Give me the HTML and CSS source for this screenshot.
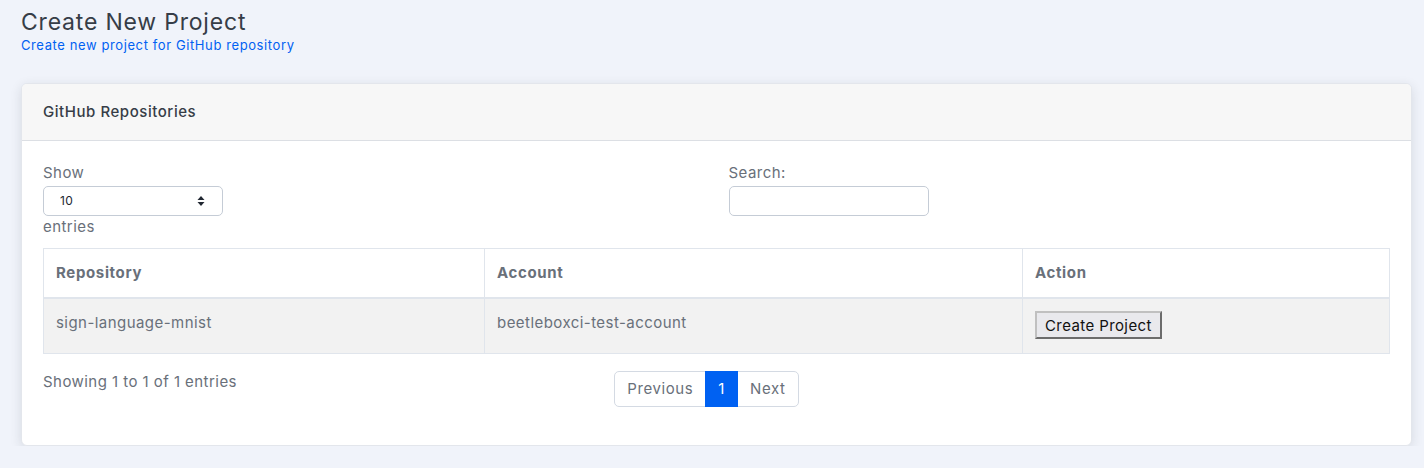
FILE: index.html
```html
<!DOCTYPE html>
<html lang="en">
<head>
    <meta charset="UTF-8">
    <meta name="viewport" content="width=device-width, initial-scale=1.0">
    <title>Create New Project</title>
    <link rel="stylesheet" href="styles.css">
</head>
<body>

    <!-- Page heading -->
    <div class="page-head">
        <h1>Create New Project</h1>
        <div class="subtitle">Create new project for GitHub repository</div>
    </div>

    <!-- Repository card -->
    <div class="card">
        <div class="card-header">GitHub Repositories</div>
        <div class="card-body">

            <div class="row">
                <div class="col-half">
                    <div>Show</div>
                    <div class="select-box">
                        <span>10</span>
                        <svg width="8" height="12" viewBox="0 0 8 12">
                            <path d="M4 1 L7.5 5 H0.5 Z M4 11 L7.5 7 H0.5 Z" fill="#212832"/>
                        </svg>
                    </div>
                    <div>entries</div>
                </div>
                <div class="col-half">
                    <div>Search:</div>
                    <input class="search-input" type="search">
                </div>
            </div>

            <table>
                <thead>
                    <tr>
                        <th class="col-repo">Repository</th>
                        <th class="col-account">Account</th>
                        <th>Action</th>
                    </tr>
                </thead>
                <tbody>
                    <tr>
                        <td>sign-language-mnist</td>
                        <td>beetleboxci-test-account</td>
                        <td><button class="btn-create">Create Project</button></td>
                    </tr>
                </tbody>
            </table>

            <div class="row table-bottom">
                <div class="col-5 info">Showing 1 to 1 of 1 entries</div>
                <div class="col-7">
                    <div class="pagination">
                        <a class="page-link">Previous</a>
                        <a class="page-link active">1</a>
                        <a class="page-link">Next</a>
                    </div>
                </div>
            </div>

        </div>
    </div>

</body>
</html>
```

FILE: styles.css
```css
body {
    font-family: 'Inter', sans-serif;
    background-color: #f0f3fa;
    margin: 0;
    padding: 0 12px 0 21px;
    color: #69707a;
    font-size: 15px;
    letter-spacing: 0.45px;
}
.page-head {
    padding-top: 8px;
}
h1 {
    margin: 0;
    font-size: 23px;
    font-weight: 400;
    color: #363d47;
    line-height: 28px;
    letter-spacing: 0.8px;
}
.subtitle {
    color: #0061f2;
    font-size: 13px;
    line-height: 18px;
    letter-spacing: 0.6px;
}
.card {
    margin-top: 29px;
    background-color: #fff;
    border-radius: 6px;
    border: 1px solid #e3e6ec;
    box-shadow: 0 3px 12px rgba(33, 40, 50, 0.12);
    overflow: hidden;
}
.card-header {
    background-color: #f7f7f7;
    border-bottom: 1px solid #dcdfe4;
    height: 56px;
    line-height: 56px;
    padding: 0 21px;
    font-size: 15px;
    font-weight: 500;
    color: #363d47;
    letter-spacing: 0.55px;
}
.card-body {
    padding: 22px 21px 38px;
}
.row {
    display: flex;
    margin: 0 -12px;
    line-height: 20px;
}
.col-half {
    flex: 0 0 50%;
    padding: 0 12px;
    box-sizing: border-box;
}
.col-5 {
    flex: 0 0 41.6667%;
    padding: 0 12px;
    box-sizing: border-box;
}
.col-7 {
    flex: 0 0 58.3333%;
    padding: 0 12px;
    box-sizing: border-box;
}
.info {
    padding-top: 1px;
}
.select-box {
    display: flex;
    align-items: center;
    justify-content: space-between;
    margin: 3px 0 1px;
    padding: 0 17px 0 16px;
    box-sizing: border-box;
    width: 180px;
    height: 30px;
    border: 1px solid #c5ccd6;
    border-radius: 5px;
    font-size: 12px;
    color: #212832;
}
.search-input {
    display: block;
    width: 200px;
    height: 30px;
    margin: 3px 0 1px;
    box-sizing: border-box;
    border: 1px solid #c5ccd6;
    border-radius: 5px;
    background: #fff;
}
table {
    margin-top: 11px;
    width: 100%;
    border-collapse: collapse;
}
th, td {
    border: 1px solid #e0e5ec;
    padding: 12px;
    text-align: left;
    line-height: 24px;
    vertical-align: top;
}
th {
    border-bottom-width: 2px;
    font-weight: 700;
    letter-spacing: 0.65px;
}
td {
    background-color: #f2f2f2;
    height: 30px;
}
.col-repo {
    width: 416px;
}
.col-account {
    width: 513px;
}
.btn-create {
    font-family: inherit;
    font-size: 15px;
    letter-spacing: 0.4px;
    color: #111;
    background-color: #e9e9ed;
    border: 2px outset #c0c0c0;
    padding: 3px 8px 2px;
    line-height: 19px;
}
.table-bottom {
    margin-top: 17px;
}
.pagination {
    display: flex;
}
.page-link {
    display: block;
    padding: 0 12px;
    height: 34px;
    line-height: 34px;
    border: 1px solid #d4dae3;
    color: #69707a;
    margin-left: -1px;
    letter-spacing: 0.6px;
}
.page-link:first-child {
    margin-left: 0;
    border-radius: 5px 0 0 5px;
}
.page-link:last-child {
    border-radius: 0 5px 5px 0;
}
.page-link.active {
    background-color: #0061f2;
    border-color: #0061f2;
    color: #fff;
    position: relative;
}
```
